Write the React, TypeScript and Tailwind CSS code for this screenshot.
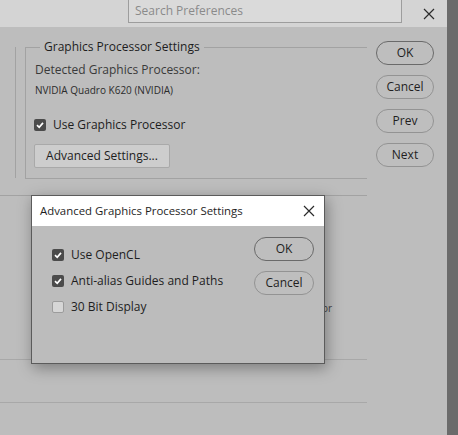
import React from "react";

/* ── small pieces ──────────────────────────────────────────── */

function CheckBox({ checked }: { checked: boolean }) {
  if (!checked) {
    return (
      <span className="block h-[12px] w-[12px] shrink-0 rounded-[2px] border border-[#9c9c9c] bg-[#d6d6d6]" />
    );
  }
  return (
    <span className="flex h-[12px] w-[12px] shrink-0 items-center justify-center rounded-[2px] bg-[#4b4b4b]">
      <svg width="10" height="10" viewBox="0 0 10 10">
        <path d="M2 5.2 L4.2 7.3 L8 2.9" fill="none" stroke="#ffffff" strokeWidth="1.7" />
      </svg>
    </span>
  );
}

function CloseX({ size }: { size: number }) {
  return (
    <svg width={size} height={size} viewBox="0 0 12 12">
      <path d="M1 1 L11 11 M11 1 L1 11" stroke="#2b2b2b" strokeWidth="1.2" fill="none" />
    </svg>
  );
}

function PillButton({ label, primary }: { label: string; primary?: boolean }) {
  return (
    <button
      className={`flex h-[24px] items-center justify-center rounded-full bg-[#bebebe] text-[12px] leading-none text-[#1f1f1f] ${
        primary ? "border border-[#6a6a6a]" : "border border-[#939393]"
      }`}
    >
      {label}
    </button>
  );
}

/* ── page ──────────────────────────────────────────────────── */

export default function App() {
  return (
    <div className="relative flex h-[435px] w-[458px] overflow-hidden bg-[#bdbdbd] font-['Open_Sans',sans-serif] text-[#222]">
      <div className="flex w-[447px] flex-col">
        {/* 顶栏 + 搜索 */}
        <div className="flex h-[27px] shrink-0 items-start bg-[#d4d4d4]">
          <div className="ml-[128px] flex h-[23px] w-[274px] items-center border border-t-0 border-[#9d9d9d] bg-[#dadada] pl-[6px] text-[12px] text-[#8a8a8a]">
            Search Preferences
          </div>
          <div className="ml-[21px] mt-[8px]">
            <CloseX size={12} />
          </div>
        </div>

        <div className="flex flex-1">
          {/* 左侧内容 */}
          <div className="flex w-[367px] flex-col pt-[12px]">
            <div className="flex">
              <div className="mt-[8px] h-[131px] w-[16px] border-r border-[#a2a2a2]" />
              <fieldset className="ml-[9px] flex-1 border-y border-l border-[#a2a2a2] pb-[10px] pl-[8px]">
                <legend className="ml-[6px] px-[4px] text-[12px] leading-[16px] text-[#1e1e1e]">
                  Graphics Processor Settings
                </legend>
                <div className="ml-[1px] mt-[7px] text-[12px] leading-[16px] text-[#3a3a3a]">
                  Detected Graphics Processor:
                </div>
                <div className="ml-[1px] mt-[5px] text-[10px] leading-[14px] text-[#2c2c2c]">
                  NVIDIA Quadro K620 (NVIDIA)
                </div>
                <div className="mt-[20px] flex h-[16px] items-center gap-[7px]">
                  <CheckBox checked />
                  <span className="text-[12px] text-[#1e1e1e]">Use Graphics Processor</span>
                </div>
                <button className="mt-[11px] flex h-[24px] w-[136px] items-center justify-center rounded-[2px] border border-[#a9a9a9] bg-[#cdcdcd] text-[12px] text-[#1e1e1e]">
                  Advanced Settings...
                </button>
              </fieldset>
            </div>

            <div className="mt-[16px] border-t border-[#a2a2a2]" />
            <div className="mt-[104px] flex h-[16px] justify-end pr-[35px] text-[10px] leading-[16px] text-[#444]">
              Processor
            </div>
            <div className="mt-[43px] border-t border-[#a8a8a8]" />
            <div className="mt-[42px] border-t border-[#a8a8a8]" />
          </div>

          {/* 右侧按钮 */}
          <div className="ml-[9px] mt-[14px] flex w-[58px] flex-col gap-[10px]">
            <PillButton label="OK" primary />
            <PillButton label="Cancel" />
            <PillButton label="Prev" />
            <PillButton label="Next" />
          </div>
        </div>
      </div>
      <div className="w-[11px] bg-[#6b6b6b]" />

      {/* 高级设置对话框 */}
      <div className="absolute left-[31px] top-[195px] flex h-[169px] w-[294px] flex-col border border-[#5b5b5b] bg-[#bcbcbc] shadow-[2px_4px_14px_rgba(0,0,0,0.35)]">
        <div className="flex h-[30px] shrink-0 items-center justify-between bg-white pl-[8px] pr-[9px]">
          <span className="text-[11.4px] text-[#1e1e1e]">Advanced Graphics Processor Settings</span>
          <CloseX size={12} />
        </div>
        <div className="flex flex-1">
          <div className="flex flex-1 flex-col gap-[10px] pl-[20px] pt-[21px]">
            <div className="flex h-[16px] items-center gap-[7px]">
              <CheckBox checked />
              <span className="text-[12px] text-[#1e1e1e]">Use OpenCL</span>
            </div>
            <div className="flex h-[16px] items-center gap-[7px]">
              <CheckBox checked />
              <span className="text-[12px] text-[#1e1e1e]">Anti-alias Guides and Paths</span>
            </div>
            <div className="flex h-[16px] items-center gap-[7px]">
              <CheckBox checked={false} />
              <span className="text-[12px] text-[#1e1e1e]">30 Bit Display</span>
            </div>
          </div>
          <div className="mr-[10px] mt-[11px] flex w-[60px] flex-col gap-[10px]">
            <PillButton label="OK" primary />
            <PillButton label="Cancel" />
          </div>
        </div>
      </div>
    </div>
  );
}
